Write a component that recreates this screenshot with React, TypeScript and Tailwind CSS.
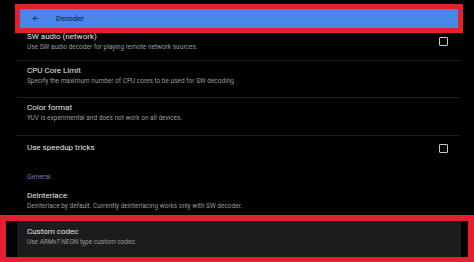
import type { ReactNode } from "react";

const font = { fontFamily: "Roboto, 'Liberation Sans', sans-serif" };

function Divider() {
  return <div className="ml-[17px] mr-[14px] h-px bg-[#1e1e1e]" />;
}

function Checkbox({ className = "" }: { className?: string }) {
  return <span className={`block size-[9px] shrink-0 rounded-[1px] border-[1.5px] border-[#c8c8c8] ${className}`} />;
}

function Row({ title, sub, check, className }: { title: string; sub?: ReactNode; check?: boolean; className: string }) {
  return (
    <div className={`flex items-center pl-[27px] pr-[26px] ${className}`}>
      <div className="flex-1">
        <div className="text-[8px] leading-[11px] text-[#e6e6e6]">{title}</div>
        {sub && <div className="text-[6.5px] leading-[10px] text-[#9c9c9c]">{sub}</div>}
      </div>
      {check && <Checkbox />}
    </div>
  );
}

export default function App() {
  return (
    <div className="w-[474px] h-[262px] overflow-hidden bg-black flex flex-col" style={font}>
      <div className="ml-[15px] mr-[11px] mt-[4px] h-[29px] shrink-0 border-[5px] border-[#e3202c]">
        <div className="h-full bg-[#4a86e8] flex items-center pl-[12px]">
          <svg width="7" height="7" viewBox="0 0 24 24" fill="none" stroke="#16275a" strokeWidth="3" strokeLinecap="round" strokeLinejoin="round">
            <path d="M20 12H4" />
            <path d="M11 5l-7 7 7 7" />
          </svg>
          <span className="ml-[17px] text-[7.5px] font-medium text-[#16275a]">Decoder</span>
        </div>
      </div>

      <Row className="-mt-[2px] h-[29px] pb-[8px]" title="SW audio (network)" sub="Use SW audio decoder for playing remote network sources." check />
      <Divider />
      <Row className="h-[36px] pb-[8px]" title="CPU Core Limit" sub="Specify the maximum number of CPU cores to be used for SW decoding." />
      <Divider />
      <Row className="h-[37px] pb-[8px]" title="Color format" sub="YUV is experimental and does not work on all devices." />
      <Divider />
      <div className="h-[36px] flex items-start pl-[27px] pr-[26px] pt-[6px]">
        <div className="flex-1 text-[8px] leading-[11px] text-[#e6e6e6]">Use speedup tricks</div>
        <Checkbox className="mt-[2px]" />
      </div>
      <div className="h-[10px] pl-[27px] text-[7px] leading-[10px] text-[#7676b6]">General</div>
      <Row className="h-[33px] pt-[8px] !items-start" title="Deinterlace" sub="Deinterlace by default. Currently deinterlacing works only with SW decoder." />

      <div className="flex-1 border-[6px] border-b-[5px] border-[#e3202c] pl-[11px] pr-[7px] flex">
        <div className="flex-1 bg-[#1c1c1e] pl-[10px] pt-[5px]">
          <div className="text-[8px] leading-[11px] text-[#e6e6e6]">Custom codec</div>
          <div className="text-[6.5px] leading-[10px] text-[#9c9c9c]">
            Use <i>ARMv7 NEON</i> type custom codec.
          </div>
        </div>
      </div>
    </div>
  );
}
